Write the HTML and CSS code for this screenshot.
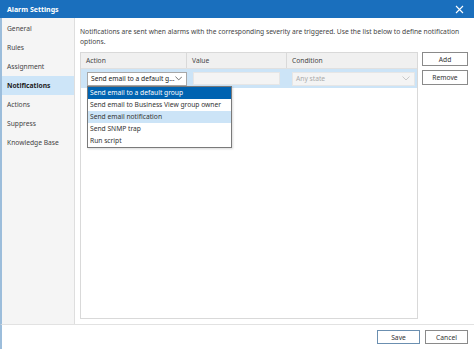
FILE: index.html
```html
<!DOCTYPE html>
<html lang="en">
<head>
    <meta charset="UTF-8">
    <title>Alarm Settings</title>
    <link rel="stylesheet" href="styles.css">
</head>
<body>
    <div class="titlebar">
        <span class="title">Alarm Settings</span>
        <svg class="close" width="9" height="9" viewBox="0 0 9 9"><path d="M1 1L8 8M8 1L1 8" stroke="#fff" stroke-width="1.1"/></svg>
    </div>
    <div class="main">
        <ul class="sidebar">
            <li>General</li>
            <li>Rules</li>
            <li>Assignment</li>
            <li class="active">Notifications</li>
            <li>Actions</li>
            <li>Suppress</li>
            <li>Knowledge Base</li>
        </ul>
        <div class="content">
            <p class="intro">Notifications are sent when alarms with the corresponding severity are triggered. Use the list below to define notification options.</p>
            <div class="table-area">
                <div class="grid">
                    <div class="grid-head">
                        <div class="col col-action">Action</div>
                        <div class="col col-value">Value</div>
                        <div class="col col-cond">Condition</div>
                    </div>
                    <div class="grid-row">
                        <div class="col col-action">
                            <div class="select">
                                <span>Send email to a default g...</span>
                                <svg width="8" height="5" viewBox="0 0 8 5"><path d="M0.5 0.5L4 4L7.5 0.5" fill="none" stroke="#555" stroke-width="0.9"/></svg>
                            </div>
                        </div>
                        <div class="col col-value"><div class="input"></div></div>
                        <div class="col col-cond">
                            <div class="select disabled">
                                <span>Any state</span>
                                <svg width="8" height="5" viewBox="0 0 8 5"><path d="M0.5 0.5L4 4L7.5 0.5" fill="none" stroke="#c4c4c4" stroke-width="0.9"/></svg>
                            </div>
                        </div>
                    </div>
                    <ul class="dropdown">
                        <li class="selected">Send email to a default group</li>
                        <li>Send email to Business View group owner</li>
                        <li class="hover">Send email notification</li>
                        <li>Send SNMP trap</li>
                        <li>Run script</li>
                    </ul>
                </div>
                <div class="side-buttons">
                    <button class="btn">Add</button>
                    <button class="btn">Remove</button>
                </div>
            </div>
        </div>
    </div>
    <div class="footer">
        <button class="btn footer-btn primary">Save</button>
        <button class="btn footer-btn">Cancel</button>
    </div>
</body>
</html>
```

FILE: styles.css
```css
* {
    box-sizing: border-box;
}
body {
    margin: 0;
    width: 474px;
    height: 349px;
    display: flex;
    flex-direction: column;
    font-family: "Noto Sans", "Open Sans", sans-serif;
    font-size: 6.7px;
    color: #333;
    background-color: #fff;
    overflow: hidden;
}
.titlebar {
    height: 18px;
    flex-shrink: 0;
    background-color: #1a6fbd;
    color: #fff;
    display: flex;
    align-items: center;
    justify-content: space-between;
    padding: 0 10px 0 7px;
}
.title {
    font-weight: bold;
    font-size: 7px;
}
.main {
    flex: 1;
    display: flex;
    border-left: 2px solid #9cbddb;
    border-bottom: 1px solid #e2e2e2;
}
.sidebar {
    list-style: none;
    margin: 0;
    padding: 1px 0 0;
    width: 73px;
    background-color: #f5f5f5;
    border-right: 1px solid #dedede;
}
.sidebar li {
    height: 19px;
    line-height: 19px;
    padding-left: 5px;
    color: #444;
}
.sidebar li.active {
    background-color: #cde5f8;
    font-weight: bold;
    color: #222;
}
.content {
    flex: 1;
    padding: 9px 5px 5px 5px;
    display: flex;
    flex-direction: column;
}
.intro {
    margin: 0 0 5px;
    line-height: 10px;
    color: #444;
}
.table-area {
    flex: 1;
    display: flex;
    gap: 4px;
}
.grid {
    width: 338px;
    border: 1px solid #d9d9d9;
    position: relative;
}
.grid-head {
    display: flex;
    height: 16px;
    background-color: #f0f0f0;
    border-bottom: 1px solid #e0e0e0;
}
.grid-head .col {
    line-height: 15px;
    padding-left: 5px;
    color: #444;
}
.col-action {
    width: 106px;
    border-right: 1px solid #d9d9d9;
}
.col-value {
    width: 100px;
    border-right: 1px solid #d9d9d9;
}
.col-cond {
    flex: 1;
}
.grid-row {
    display: flex;
    height: 19px;
    background-color: #cce4f7;
}
.grid-row .col {
    border-right: none;
    display: flex;
    align-items: center;
    padding-left: 6px;
}
.grid-row .col-cond {
    padding-left: 5px;
}
.select {
    width: 100px;
    height: 14px;
    background-color: #fff;
    border: 1px solid #a8a8a8;
    display: flex;
    align-items: center;
    justify-content: space-between;
    padding: 0 4px 0 3px;
    color: #222;
    white-space: nowrap;
}
.select.disabled {
    width: 123px;
    background-color: #f4f4f4;
    border-color: #e6e6e6;
    color: #aaa;
}
.input {
    width: 87px;
    height: 13px;
    background-color: #f4f4f4;
    border: 1px solid #e6e6e6;
}
.dropdown {
    position: absolute;
    top: 33px;
    left: 6px;
    width: 145px;
    margin: 0;
    padding: 0;
    list-style: none;
    background-color: #fff;
    border: 1px solid #7a7a7a;
    box-shadow: 1px 1px 2px rgba(0, 0, 0, 0.15);
}
.dropdown li {
    height: 12px;
    line-height: 12px;
    padding-left: 2px;
    color: #333;
    white-space: nowrap;
}
.dropdown li.selected {
    background-color: #0063b1;
    color: #fff;
}
.dropdown li.hover {
    background-color: #cce4f7;
}
.side-buttons {
    display: flex;
    flex-direction: column;
    gap: 4px;
}
.btn {
    font-family: inherit;
    font-size: 6.7px;
    color: #333;
    background-color: #fff;
    border: 1px solid #8a8a8a;
    padding: 0;
    width: 46px;
    height: 14px;
}
.side-buttons .btn + .btn {
    height: 15px;
}
.footer {
    height: 24px;
    flex-shrink: 0;
    display: flex;
    justify-content: flex-end;
    align-items: center;
    gap: 5px;
    padding-right: 6px;
    border-left: 2px solid #9cbddb;
}
.footer-btn {
    width: 43px;
    height: 14px;
}
.footer-btn.primary {
    border-color: #6b8fb0;
}
```
